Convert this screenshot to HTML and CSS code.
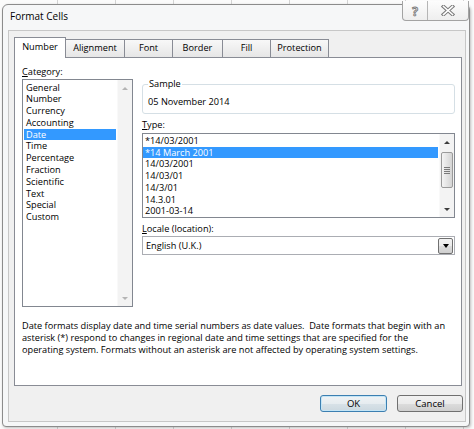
FILE: index.html
```html
<!DOCTYPE html>
<html lang="en">
<head>
<meta charset="utf-8">
<title>Format Cells</title>
<link rel="stylesheet" href="styles.css">
</head>
<body>
<div class="dialog">
  <div class="titlebar">
    <span class="title">Format Cells</span>
  </div>
  <div class="caption-btns">
    <span class="cb help">?</span>
    <span class="cb close">
      <svg width="14" height="11" viewBox="0 0 14 11">
        <path d="M2.5 1.5 L11.5 9.5 M11.5 1.5 L2.5 9.5" stroke="#7a7a7a" stroke-width="3.6" stroke-linecap="square" fill="none"/>
        <path d="M2.5 1.5 L11.5 9.5 M11.5 1.5 L2.5 9.5" stroke="#ffffff" stroke-width="1.6" stroke-linecap="square" fill="none"/>
      </svg>
    </span>
  </div>
  <div class="client">
    <div class="tabs">
      <span class="tab selected t-number">Number</span>
      <span class="tab t-alignment">Alignment</span>
      <span class="tab t-font">Font</span>
      <span class="tab t-border">Border</span>
      <span class="tab t-fill">Fill</span>
      <span class="tab t-protection">Protection</span>
    </div>
    <div class="panel">
      <div class="top-row">
        <div class="left-col">
          <div class="label"><u>C</u>ategory:</div>
          <div class="listbox cat-list">
            <ul class="items">
              <li>General</li>
              <li>Number</li>
              <li>Currency</li>
              <li>Accounting</li>
              <li class="sel">Date</li>
              <li>Time</li>
              <li>Percentage</li>
              <li>Fraction</li>
              <li>Scientific</li>
              <li>Text</li>
              <li>Special</li>
              <li>Custom</li>
            </ul>
            <div class="vscroll disabled">
              <span class="arrow up"></span>
              <span class="track"></span>
              <span class="arrow down"></span>
            </div>
          </div>
        </div>
        <div class="right-col">
          <fieldset class="sample">
            <legend>Sample</legend>
            <div class="sample-value">05 November 2014</div>
          </fieldset>
          <div class="label type-label"><u>T</u>ype:</div>
          <div class="listbox type-list">
            <ul class="items">
              <li>*14/03/2001</li>
              <li class="sel">*14 March 2001</li>
              <li>14/03/2001</li>
              <li>14/03/01</li>
              <li>14/3/01</li>
              <li>14.3.01</li>
              <li>2001-03-14</li>
            </ul>
            <div class="vscroll">
              <span class="arrow up"></span>
              <span class="track"><span class="thumb"><span class="grip"></span></span></span>
              <span class="arrow down"></span>
            </div>
          </div>
          <div class="label locale-label"><u>L</u>ocale (location):</div>
          <div class="combo">
            <span class="combo-text">English (U.K.)</span>
            <span class="drop"><span class="tri"></span></span>
          </div>
        </div>
      </div>
      <p class="desc">Date formats display date and time serial numbers as date values.&nbsp; Date formats that begin with an<br>asterisk (*) respond to changes in regional date and time settings that are specified for the<br>operating system. Formats without an asterisk are not affected by operating system settings.</p>
    </div>
    <div class="buttons">
      <button class="btn default">OK</button>
      <button class="btn">Cancel</button>
    </div>
  </div>
</div>
</body>
</html>
```
FILE: styles.css
```css
* { box-sizing: border-box; }
html, body { margin: 0; padding: 0; }
body {
  width: 474px;
  height: 429px;
  overflow: hidden;
  background: #fbfbfb repeating-linear-gradient(to right, transparent 0 57px, #d4d4d4 57px 58px);
  font-family: "Open Sans", "DejaVu Sans", sans-serif;
  font-size: 9.2px;
  color: #000;
}
.dialog {
  position: relative;
  margin: 4px 0 0 2px;
  width: 468px;
  height: 423px;
  border: 1px solid #8c8c8c;
  border-radius: 6px 6px 4px 4px;
  background: #f6f7f8;
  box-shadow: 1px 1px 3px rgba(0,0,0,.25);
  display: flex;
  flex-direction: column;
}
.titlebar {
  height: 25px;
  padding: 5px 0 0 7px;
  line-height: 12px;
}
.title { font-size: 10px; }
.caption-btns {
  position: absolute;
  top: -4px;
  left: 399px;
  display: flex;
  height: 20px;
  border: 1px solid #a3a3a3;
  border-top: none;
  border-radius: 0 0 4px 4px;
  background: linear-gradient(#fdfdfd, #eeeeee);
  overflow: hidden;
}
.cb {
  display: flex;
  align-items: center;
  justify-content: center;
}
.help {
  width: 25px;
  border-right: 1px solid #b5b5b5;
  font-size: 12px;
  font-weight: bold;
  color: #ffffff;
  -webkit-text-stroke: 0.9px #7a7a7a;
  padding-top: 1px;
}
.close { width: 40px; }
.client {
  flex: 1;
  margin: 0 3px 4px 5px;
  border: 1px solid #c7c7c7;
  background: #f0f0f0;
  padding-top: 8px;
  display: flex;
  flex-direction: column;
}
.tabs {
  display: flex;
  align-items: flex-end;
  height: 18px;
  margin-left: 5px;
  position: relative;
  z-index: 2;
}
.tab {
  height: 18px;
  border: 1px solid #898c95;
  border-bottom: none;
  background: linear-gradient(#f8f8f8, #e6e6e6);
  margin-left: -1px;
  text-align: center;
  line-height: 16px;
}
.tab.selected {
  height: 21px;
  margin-bottom: -1px;
  margin-left: 0;
  background: #ffffff;
  line-height: 18px;
}
.t-number { width: 52px; }
.t-alignment { width: 60px; }
.t-font { width: 49px; }
.t-border { width: 51px; }
.t-fill { width: 49px; }
.t-protection { width: 59px; }
.panel {
  height: 329px;
  margin: 0 3px 0 5px;
  border: 1px solid #898c95;
  background: #ffffff;
  padding: 8px 6px 0 7px;
}
.top-row {
  display: flex;
  gap: 9px;
}
.left-col { width: 111px; }
.right-col { width: 313px; padding-top: 12px; }
.label { line-height: 12px; }
.label u { text-decoration: underline; text-underline-offset: 1px; }
.left-col .label { margin-bottom: 1px; }
.listbox {
  border: 1px solid #828790;
  background: #fff;
  display: flex;
  overflow: hidden;
}
.items {
  flex: 1;
  list-style: none;
  margin: 0;
  padding: 1px 1px 0 1px;
  overflow: hidden;
}
.items li {
  padding-left: 2px;
  white-space: nowrap;
}
.items li.sel { background: #3399ff; color: #fff; }
.cat-list { height: 228px; }
.cat-list .items { padding-top: 1.5px; }
.cat-list .items li { line-height: 11.8px; }
.type-list { height: 85px; margin-top: 2px; }
.type-list .items { padding: 1px 1px 0 0; }
.type-list .items li { line-height: 11.7px; }
.vscroll {
  width: 15px;
  display: flex;
  flex-direction: column;
  background: #f3f3f3;
  border-left: 1px solid #f9f9f9;
}
.arrow {
  height: 16px;
  display: flex;
  align-items: center;
  justify-content: center;
}
.arrow::before {
  content: "";
  border-left: 3px solid transparent;
  border-right: 3px solid transparent;
}
.arrow.up::before { border-bottom: 3px solid #3c3c3c; }
.arrow.down::before { border-top: 3px solid #3c3c3c; }
.vscroll.disabled .arrow.up::before { border-bottom-color: #b4b4b4; }
.vscroll.disabled .arrow.down::before { border-top-color: #b4b4b4; }
.track { flex: 1; display: flex; flex-direction: column; }
.thumb {
  margin: 2px 1px 0 1px;
  height: 36px;
  border: 1px solid #9a9a9a;
  border-radius: 2px;
  background: linear-gradient(to right, #f4f4f4, #e4e4e4 50%, #d4d4d4);
  display: flex;
  align-items: center;
  justify-content: center;
}
.grip {
  width: 6px;
  height: 7px;
  background: repeating-linear-gradient(#7a7a7a 0 1px, transparent 1px 2px);
}
.sample {
  margin: 0;
  height: 36px;
  padding: 0 6px 0 5px;
  border: 1px solid #d5dfe5;
  border-radius: 3px;
}
.sample legend {
  padding: 0 1px;
  line-height: 12px;
}
.sample-value { padding-top: 6px; line-height: 12px; }
.type-label { margin-top: 5px; }
.locale-label { margin-top: 5px; }
.combo {
  margin-top: 1px;
  height: 19px;
  border: 1px solid #abadb3;
  background: #fff;
  display: flex;
  align-items: center;
  justify-content: space-between;
  padding: 0 1px 0 3px;
}
.drop {
  width: 15px;
  height: 16px;
  border: 1px solid #707070;
  border-radius: 2px;
  background: linear-gradient(#f2f2f2, #ebebeb 50%, #dddddd 50%, #cfcfcf);
  display: flex;
  align-items: center;
  justify-content: center;
}
.tri {
  border-left: 3.5px solid transparent;
  border-right: 3.5px solid transparent;
  border-top: 4px solid #000;
}
.desc {
  margin: 13px 0 0 0;
  line-height: 12px;
  white-space: nowrap;
}
.buttons {
  display: flex;
  justify-content: flex-end;
  gap: 10px;
  margin-top: 9px;
  padding-right: 2px;
}
.btn {
  height: 17px;
  width: 66px;
  padding: 0;
  font-family: "Open Sans", "DejaVu Sans", sans-serif;
  font-size: 9.5px;
  color: #000;
  border: 1px solid #707070;
  border-radius: 3px;
  background: linear-gradient(#f2f2f2, #ebebeb 50%, #dddddd 50%, #cfcfcf);
  line-height: 15px;
}
.btn.default {
  width: 67px;
  border-color: #3c7fb1;
  box-shadow: inset 0 0 0 1px #c4e5f6;
  background: linear-gradient(#f0f3f5, #e6ecf0 50%, #d8e2e8 50%, #ccd8e0);
}
```
